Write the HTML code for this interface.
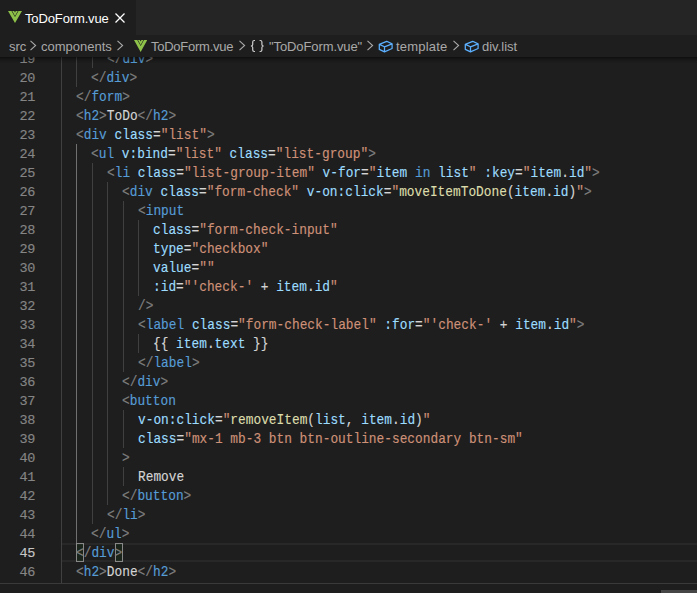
<!DOCTYPE html><html><head><meta charset="utf-8"><style>
html,body{margin:0;padding:0}
body{width:697px;height:593px;overflow:hidden;position:relative;background:#1e1e1e;font-family:"Liberation Sans",sans-serif}
#tabs{position:absolute;left:0;top:0;width:697px;height:35px;background:#252526}
#tab{position:absolute;left:0;top:0;width:136px;height:35px;background:#1e1e1e}
#tab .name{position:absolute;left:25px;top:11px;letter-spacing:-0.13px;font-size:13px;color:#ffffff;line-height:16px;white-space:nowrap}
#crumbs{position:absolute;left:0;top:35px;width:697px;height:22px;background:#1e1e1e;font-size:13px;color:#a9a9a9;white-space:nowrap}
#crumbs span{position:absolute;top:4px;line-height:16px}
#ed{position:absolute;left:0;top:57px;width:697px;height:526px;overflow:hidden;font-family:"Liberation Mono",monospace}
#shadow{position:absolute;left:0;top:57px;width:697px;height:6px;box-shadow:#000 0 6px 6px -6px inset;z-index:5}
.l{position:absolute;height:19px;line-height:19px;font-size:13.75px;letter-spacing:0px;white-space:pre;padding-top:1px;-webkit-text-stroke:0.15px;transform:scaleX(0.9325873846195798);transform-origin:0 0;color:#d4d4d4}
.ln{position:absolute;left:0;width:35px;text-align:right;height:19px;line-height:19px;font-size:13.5px;letter-spacing:-0.406px;color:#858585;padding-top:1px;-webkit-text-stroke:0.15px}
.ln.act{color:#c6c6c6}
.g{position:absolute;width:1px;height:19px;background:#404040}
.g.ga{background:#707070}
.cur{position:absolute;left:61px;right:0;height:19px;box-sizing:border-box;border-top:2px solid #282828;border-bottom:2px solid #282828}
.bm{position:absolute;height:19px;box-sizing:border-box;border:1px solid #888888;background:rgba(0,100,0,0.1)}
#hline{position:absolute;left:0;top:583px;width:697px;height:1px;background:#3a3a3a}
#hthumb{position:absolute;left:661px;top:590px;width:36px;height:3px;background:#464646}
.chev{position:absolute;top:5.45px;width:8px;height:12px;fill:none;stroke:#a9a9a9;stroke-width:1.1}

</style></head><body>
<div id="tabs"><div id="tab">
<svg style="position:absolute;left:8px;top:11px" width="14" height="12" viewBox="0 0 14 12"><path d="M0 0H3.5L7 6.1L10.5 0H14L7 12Z" fill="#8dc149"/><path d="M4.2 0H6.2L7 1.4L7.8 0H9.8L7 4.9Z" fill="#8dc149"/></svg>
<div class="name">ToDoForm.vue</div>
<svg style="position:absolute;left:115px;top:13px" width="10" height="10" viewBox="0 0 10 10"><path d="M0.5 0.5L9.5 9.5M9.5 0.5L0.5 9.5" stroke="#ffffff" stroke-width="1.3"/></svg>
</div></div>
<div id="crumbs">
<span style="left:9px">src</span>
<svg class="chev" style="left:30px"><path d="M0.5 0.8L5.6 5.5L0.5 10.2"/></svg>
<span style="left:41px">components</span>
<svg class="chev" style="left:117px"><path d="M0.5 0.8L5.6 5.5L0.5 10.2"/></svg>
<svg style="position:absolute;left:133.8px;top:4.8px" width="13.3" height="12" viewBox="0 0 14 12" preserveAspectRatio="none"><path d="M0 0H3.5L7 6.1L10.5 0H14L7 12Z" fill="#8dc149"/><path d="M4.2 0H6.2L7 1.4L7.8 0H9.8L7 4.9Z" fill="#8dc149"/></svg>
<span style="left:151px;letter-spacing:-0.25px">ToDoForm.vue</span>
<svg class="chev" style="left:238.5px"><path d="M0.5 0.8L5.6 5.5L0.5 10.2"/></svg>
<svg style="position:absolute;left:250px;top:5.3px" width="15" height="12" viewBox="0 0 15 13" preserveAspectRatio="none"><path d="M5 0.6H4.2C3.2 0.6 2.7 1.1 2.7 2.1V4.8C2.7 5.6 2.2 6.3 1 6.5C2.2 6.7 2.7 7.4 2.7 8.2V10.9C2.7 11.9 3.2 12.4 4.2 12.4H5 M9.6 0.6H10.4C11.4 0.6 11.9 1.1 11.9 2.1V4.8C11.9 5.6 12.4 6.3 13.6 6.5C12.4 6.7 11.9 7.4 11.9 8.2V10.9C11.9 11.9 11.4 12.4 10.4 12.4H9.6" fill="none" stroke="#cccccc" stroke-width="1.2"/></svg>
<span style="left:269px;letter-spacing:-0.1px">"ToDoForm.vue"</span>
<svg class="chev" style="left:367px"><path d="M0.5 0.8L5.6 5.5L0.5 10.2"/></svg>
<svg style="position:absolute;left:377.5px;top:39.5px;top:4.5px" width="16" height="14" viewBox="0 0 16 14"><path d="M8.7 1.3L14.1 3.9V8.5L6.5 11.9L1.3 9.4V4.4Z M1.3 4.4L6.5 6.8L14.1 3.9 M6.5 6.8V11.9" fill="none" stroke="#5cb0ff" stroke-width="1.25" stroke-linejoin="round"/></svg>
<span style="left:396px;letter-spacing:0.2px">template</span>
<svg class="chev" style="left:453px"><path d="M0.5 0.8L5.6 5.5L0.5 10.2"/></svg>
<svg style="position:absolute;left:463.5px;top:4.5px" width="16" height="14" viewBox="0 0 16 14"><path d="M8.7 1.3L14.1 3.9V8.5L6.5 11.9L1.3 9.4V4.4Z M1.3 4.4L6.5 6.8L14.1 3.9 M6.5 6.8V11.9" fill="none" stroke="#5cb0ff" stroke-width="1.25" stroke-linejoin="round"/></svg>
<span style="left:482px">div.list</span>
</div>
<div id="shadow"></div>

<div id="ed">
<div class="cur" style="top:486px"></div>
<div class="g" style="top:-8px;left:61px"></div>
<div class="g" style="top:-8px;left:76px"></div>
<div class="g" style="top:-8px;left:92px"></div>
<div class="g" style="top:11px;left:61px"></div>
<div class="g" style="top:11px;left:76px"></div>
<div class="g" style="top:30px;left:61px"></div>
<div class="g" style="top:49px;left:61px"></div>
<div class="g" style="top:68px;left:61px"></div>
<div class="g" style="top:87px;left:61px"></div>
<div class="g ga" style="top:87px;left:76px"></div>
<div class="g" style="top:106px;left:61px"></div>
<div class="g ga" style="top:106px;left:76px"></div>
<div class="g" style="top:106px;left:92px"></div>
<div class="g" style="top:125px;left:61px"></div>
<div class="g ga" style="top:125px;left:76px"></div>
<div class="g" style="top:125px;left:92px"></div>
<div class="g" style="top:125px;left:107px"></div>
<div class="g" style="top:144px;left:61px"></div>
<div class="g ga" style="top:144px;left:76px"></div>
<div class="g" style="top:144px;left:92px"></div>
<div class="g" style="top:144px;left:107px"></div>
<div class="g" style="top:144px;left:123px"></div>
<div class="g" style="top:163px;left:61px"></div>
<div class="g ga" style="top:163px;left:76px"></div>
<div class="g" style="top:163px;left:92px"></div>
<div class="g" style="top:163px;left:107px"></div>
<div class="g" style="top:163px;left:123px"></div>
<div class="g" style="top:163px;left:138px"></div>
<div class="g" style="top:182px;left:61px"></div>
<div class="g ga" style="top:182px;left:76px"></div>
<div class="g" style="top:182px;left:92px"></div>
<div class="g" style="top:182px;left:107px"></div>
<div class="g" style="top:182px;left:123px"></div>
<div class="g" style="top:182px;left:138px"></div>
<div class="g" style="top:201px;left:61px"></div>
<div class="g ga" style="top:201px;left:76px"></div>
<div class="g" style="top:201px;left:92px"></div>
<div class="g" style="top:201px;left:107px"></div>
<div class="g" style="top:201px;left:123px"></div>
<div class="g" style="top:201px;left:138px"></div>
<div class="g" style="top:220px;left:61px"></div>
<div class="g ga" style="top:220px;left:76px"></div>
<div class="g" style="top:220px;left:92px"></div>
<div class="g" style="top:220px;left:107px"></div>
<div class="g" style="top:220px;left:123px"></div>
<div class="g" style="top:220px;left:138px"></div>
<div class="g" style="top:239px;left:61px"></div>
<div class="g ga" style="top:239px;left:76px"></div>
<div class="g" style="top:239px;left:92px"></div>
<div class="g" style="top:239px;left:107px"></div>
<div class="g" style="top:239px;left:123px"></div>
<div class="g" style="top:258px;left:61px"></div>
<div class="g ga" style="top:258px;left:76px"></div>
<div class="g" style="top:258px;left:92px"></div>
<div class="g" style="top:258px;left:107px"></div>
<div class="g" style="top:258px;left:123px"></div>
<div class="g" style="top:277px;left:61px"></div>
<div class="g ga" style="top:277px;left:76px"></div>
<div class="g" style="top:277px;left:92px"></div>
<div class="g" style="top:277px;left:107px"></div>
<div class="g" style="top:277px;left:123px"></div>
<div class="g" style="top:277px;left:138px"></div>
<div class="g" style="top:296px;left:61px"></div>
<div class="g ga" style="top:296px;left:76px"></div>
<div class="g" style="top:296px;left:92px"></div>
<div class="g" style="top:296px;left:107px"></div>
<div class="g" style="top:296px;left:123px"></div>
<div class="g" style="top:315px;left:61px"></div>
<div class="g ga" style="top:315px;left:76px"></div>
<div class="g" style="top:315px;left:92px"></div>
<div class="g" style="top:315px;left:107px"></div>
<div class="g" style="top:334px;left:61px"></div>
<div class="g ga" style="top:334px;left:76px"></div>
<div class="g" style="top:334px;left:92px"></div>
<div class="g" style="top:334px;left:107px"></div>
<div class="g" style="top:353px;left:61px"></div>
<div class="g ga" style="top:353px;left:76px"></div>
<div class="g" style="top:353px;left:92px"></div>
<div class="g" style="top:353px;left:107px"></div>
<div class="g" style="top:353px;left:123px"></div>
<div class="g" style="top:372px;left:61px"></div>
<div class="g ga" style="top:372px;left:76px"></div>
<div class="g" style="top:372px;left:92px"></div>
<div class="g" style="top:372px;left:107px"></div>
<div class="g" style="top:372px;left:123px"></div>
<div class="g" style="top:391px;left:61px"></div>
<div class="g ga" style="top:391px;left:76px"></div>
<div class="g" style="top:391px;left:92px"></div>
<div class="g" style="top:391px;left:107px"></div>
<div class="g" style="top:410px;left:61px"></div>
<div class="g ga" style="top:410px;left:76px"></div>
<div class="g" style="top:410px;left:92px"></div>
<div class="g" style="top:410px;left:107px"></div>
<div class="g" style="top:410px;left:123px"></div>
<div class="g" style="top:429px;left:61px"></div>
<div class="g ga" style="top:429px;left:76px"></div>
<div class="g" style="top:429px;left:92px"></div>
<div class="g" style="top:429px;left:107px"></div>
<div class="g" style="top:448px;left:61px"></div>
<div class="g ga" style="top:448px;left:76px"></div>
<div class="g" style="top:448px;left:92px"></div>
<div class="g" style="top:467px;left:61px"></div>
<div class="g ga" style="top:467px;left:76px"></div>
<div class="g" style="top:486px;left:61px"></div>
<div class="g" style="top:505px;left:61px"></div>
<div class="g" style="top:524px;left:61px"></div>
<div class="bm" style="top:486px;left:76.39px;width:7.70px"></div>
<div class="bm" style="top:486px;left:114.87px;width:7.70px"></div>
<div class="ln" style="top:-8px">19</div>
<div class="ln" style="top:11px">20</div>
<div class="ln" style="top:30px">21</div>
<div class="ln" style="top:49px">22</div>
<div class="ln" style="top:68px">23</div>
<div class="ln" style="top:87px">24</div>
<div class="ln" style="top:106px">25</div>
<div class="ln" style="top:125px">26</div>
<div class="ln" style="top:144px">27</div>
<div class="ln" style="top:163px">28</div>
<div class="ln" style="top:182px">29</div>
<div class="ln" style="top:201px">30</div>
<div class="ln" style="top:220px">31</div>
<div class="ln" style="top:239px">32</div>
<div class="ln" style="top:258px">33</div>
<div class="ln" style="top:277px">34</div>
<div class="ln" style="top:296px">35</div>
<div class="ln" style="top:315px">36</div>
<div class="ln" style="top:334px">37</div>
<div class="ln" style="top:353px">38</div>
<div class="ln" style="top:372px">39</div>
<div class="ln" style="top:391px">40</div>
<div class="ln" style="top:410px">41</div>
<div class="ln" style="top:429px">42</div>
<div class="ln" style="top:448px">43</div>
<div class="ln" style="top:467px">44</div>
<div class="ln act" style="top:486px">45</div>
<div class="ln" style="top:505px">46</div>
<div class="l" style="top:-8px;left:106.87px"><span style="color:#808080">&lt;/</span><span style="color:#569cd6">div</span><span style="color:#808080">&gt;</span></div>
<div class="l" style="top:11px;left:91.48px"><span style="color:#808080">&lt;/</span><span style="color:#569cd6">div</span><span style="color:#808080">&gt;</span></div>
<div class="l" style="top:30px;left:76.09px"><span style="color:#808080">&lt;/</span><span style="color:#569cd6">form</span><span style="color:#808080">&gt;</span></div>
<div class="l" style="top:49px;left:76.09px"><span style="color:#808080">&lt;</span><span style="color:#569cd6">h2</span><span style="color:#808080">&gt;</span><span style="color:#d4d4d4">ToDo</span><span style="color:#808080">&lt;/</span><span style="color:#569cd6">h2</span><span style="color:#808080">&gt;</span></div>
<div class="l" style="top:68px;left:76.09px"><span style="color:#808080">&lt;</span><span style="color:#569cd6">div</span> <span style="color:#9cdcfe">class</span><span style="color:#d4d4d4">=</span><span style="color:#ce9178">&quot;list&quot;</span><span style="color:#808080">&gt;</span></div>
<div class="l" style="top:87px;left:91.48px"><span style="color:#808080">&lt;</span><span style="color:#569cd6">ul</span> <span style="color:#9cdcfe">v:bind</span><span style="color:#d4d4d4">=</span><span style="color:#ce9178">&quot;list&quot;</span> <span style="color:#9cdcfe">class</span><span style="color:#d4d4d4">=</span><span style="color:#ce9178">&quot;list-group&quot;</span><span style="color:#808080">&gt;</span></div>
<div class="l" style="top:106px;left:106.87px"><span style="color:#808080">&lt;</span><span style="color:#569cd6">li</span> <span style="color:#9cdcfe">class</span><span style="color:#d4d4d4">=</span><span style="color:#ce9178">&quot;list-group-item&quot;</span> <span style="color:#9cdcfe">v-for</span><span style="color:#d4d4d4">=</span><span style="color:#ce9178">&quot;</span><span style="color:#9cdcfe">item</span><span style="color:#d4d4d4"> </span><span style="color:#569cd6">in</span><span style="color:#d4d4d4"> </span><span style="color:#9cdcfe">list</span><span style="color:#ce9178">&quot;</span> <span style="color:#9cdcfe">:key</span><span style="color:#d4d4d4">=</span><span style="color:#ce9178">&quot;</span><span style="color:#9cdcfe">item</span><span style="color:#d4d4d4">.</span><span style="color:#9cdcfe">id</span><span style="color:#ce9178">&quot;</span><span style="color:#808080">&gt;</span></div>
<div class="l" style="top:125px;left:122.26px"><span style="color:#808080">&lt;</span><span style="color:#569cd6">div</span> <span style="color:#9cdcfe">class</span><span style="color:#d4d4d4">=</span><span style="color:#ce9178">&quot;form-check&quot;</span> <span style="color:#9cdcfe">v-on:click</span><span style="color:#d4d4d4">=</span><span style="color:#ce9178">&quot;</span><span style="color:#dcdcaa">moveItemToDone</span><span style="color:#d4d4d4">(</span><span style="color:#9cdcfe">item</span><span style="color:#d4d4d4">.</span><span style="color:#9cdcfe">id</span><span style="color:#d4d4d4">)</span><span style="color:#ce9178">&quot;</span><span style="color:#808080">&gt;</span></div>
<div class="l" style="top:144px;left:137.65px"><span style="color:#808080">&lt;</span><span style="color:#569cd6">input</span></div>
<div class="l" style="top:163px;left:153.04px"><span style="color:#9cdcfe">class</span><span style="color:#d4d4d4">=</span><span style="color:#ce9178">&quot;form-check-input&quot;</span></div>
<div class="l" style="top:182px;left:153.04px"><span style="color:#9cdcfe">type</span><span style="color:#d4d4d4">=</span><span style="color:#ce9178">&quot;checkbox&quot;</span></div>
<div class="l" style="top:201px;left:153.04px"><span style="color:#9cdcfe">value</span><span style="color:#d4d4d4">=</span><span style="color:#ce9178">&quot;&quot;</span></div>
<div class="l" style="top:220px;left:153.04px"><span style="color:#9cdcfe">:id</span><span style="color:#d4d4d4">=</span><span style="color:#ce9178">&quot;</span><span style="color:#ce9178">&#x27;check-&#x27;</span><span style="color:#d4d4d4"> + </span><span style="color:#9cdcfe">item</span><span style="color:#d4d4d4">.</span><span style="color:#9cdcfe">id</span><span style="color:#ce9178">&quot;</span></div>
<div class="l" style="top:239px;left:137.65px"><span style="color:#808080">/&gt;</span></div>
<div class="l" style="top:258px;left:137.65px"><span style="color:#808080">&lt;</span><span style="color:#569cd6">label</span> <span style="color:#9cdcfe">class</span><span style="color:#d4d4d4">=</span><span style="color:#ce9178">&quot;form-check-label&quot;</span> <span style="color:#9cdcfe">:for</span><span style="color:#d4d4d4">=</span><span style="color:#ce9178">&quot;</span><span style="color:#ce9178">&#x27;check-&#x27;</span><span style="color:#d4d4d4"> + </span><span style="color:#9cdcfe">item</span><span style="color:#d4d4d4">.</span><span style="color:#9cdcfe">id</span><span style="color:#ce9178">&quot;</span><span style="color:#808080">&gt;</span></div>
<div class="l" style="top:277px;left:153.04px"><span style="color:#d4d4d4">{{</span><span style="color:#d4d4d4"> </span><span style="color:#9cdcfe">item</span><span style="color:#d4d4d4">.</span><span style="color:#9cdcfe">text</span><span style="color:#d4d4d4"> </span><span style="color:#d4d4d4">}}</span></div>
<div class="l" style="top:296px;left:137.65px"><span style="color:#808080">&lt;/</span><span style="color:#569cd6">label</span><span style="color:#808080">&gt;</span></div>
<div class="l" style="top:315px;left:122.26px"><span style="color:#808080">&lt;/</span><span style="color:#569cd6">div</span><span style="color:#808080">&gt;</span></div>
<div class="l" style="top:334px;left:122.26px"><span style="color:#808080">&lt;</span><span style="color:#569cd6">button</span></div>
<div class="l" style="top:353px;left:137.65px"><span style="color:#9cdcfe">v-on:click</span><span style="color:#d4d4d4">=</span><span style="color:#ce9178">&quot;</span><span style="color:#dcdcaa">removeItem</span><span style="color:#d4d4d4">(</span><span style="color:#9cdcfe">list</span><span style="color:#d4d4d4">, </span><span style="color:#9cdcfe">item</span><span style="color:#d4d4d4">.</span><span style="color:#9cdcfe">id</span><span style="color:#d4d4d4">)</span><span style="color:#ce9178">&quot;</span></div>
<div class="l" style="top:372px;left:137.65px"><span style="color:#9cdcfe">class</span><span style="color:#d4d4d4">=</span><span style="color:#ce9178">&quot;mx-1 mb-3 btn btn-outline-secondary btn-sm&quot;</span></div>
<div class="l" style="top:391px;left:122.26px"><span style="color:#808080">&gt;</span></div>
<div class="l" style="top:410px;left:137.65px"><span style="color:#d4d4d4">Remove</span></div>
<div class="l" style="top:429px;left:122.26px"><span style="color:#808080">&lt;/</span><span style="color:#569cd6">button</span><span style="color:#808080">&gt;</span></div>
<div class="l" style="top:448px;left:106.87px"><span style="color:#808080">&lt;/</span><span style="color:#569cd6">li</span><span style="color:#808080">&gt;</span></div>
<div class="l" style="top:467px;left:91.48px"><span style="color:#808080">&lt;/</span><span style="color:#569cd6">ul</span><span style="color:#808080">&gt;</span></div>
<div class="l" style="top:486px;left:76.09px"><span style="color:#808080">&lt;/</span><span style="color:#569cd6">div</span><span style="color:#808080">&gt;</span></div>
<div class="l" style="top:505px;left:76.09px"><span style="color:#808080">&lt;</span><span style="color:#569cd6">h2</span><span style="color:#808080">&gt;</span><span style="color:#d4d4d4">Done</span><span style="color:#808080">&lt;/</span><span style="color:#569cd6">h2</span><span style="color:#808080">&gt;</span></div>
</div>
<div id="hline"></div>
<div id="hthumb"></div>

</body></html>
